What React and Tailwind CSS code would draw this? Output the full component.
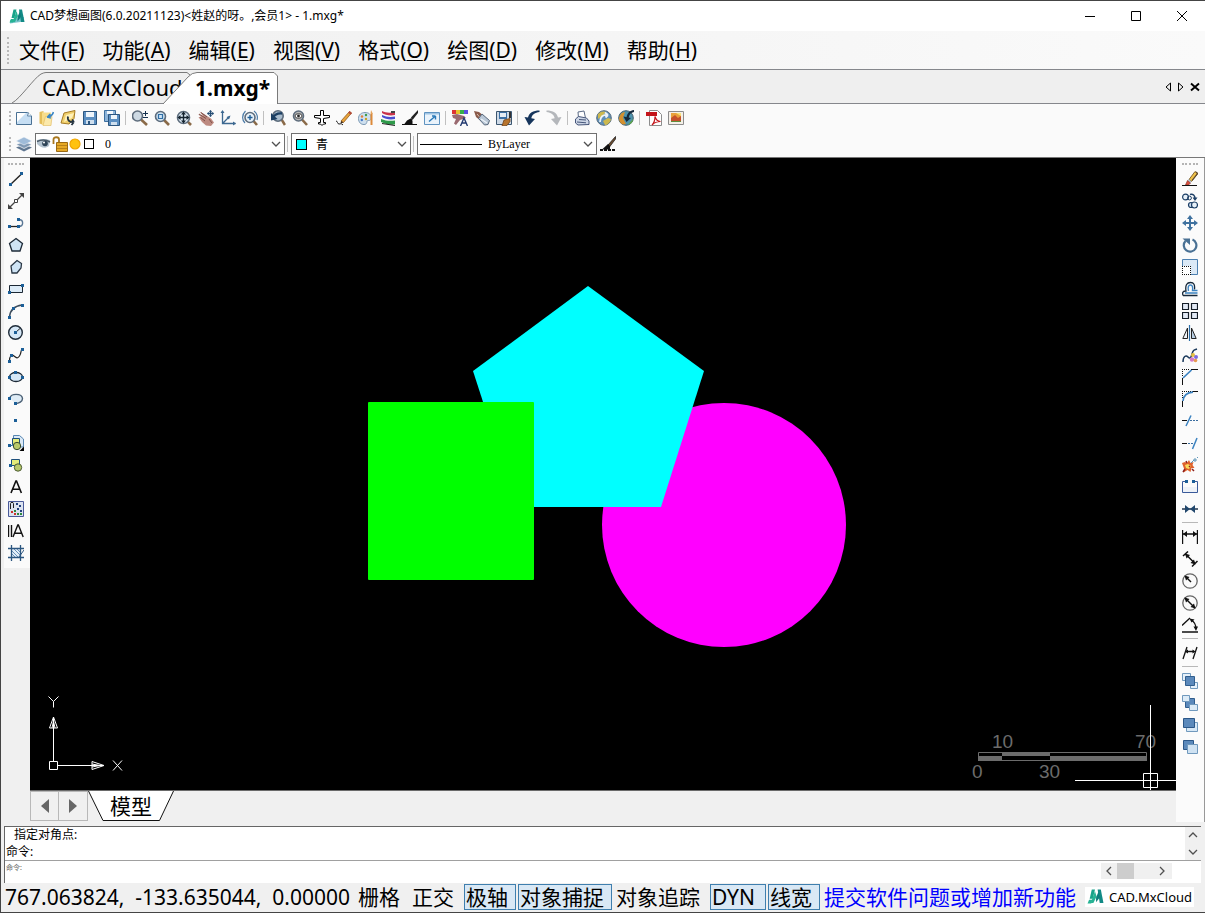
import React from "react";

const N = "#1d3f66";
const B = "#2f6ea5";

function Svg({ children }) {
  return (
    <svg viewBox="0 0 16 16" className="h-4 w-4 shrink-0" fill="none" aria-hidden="true">
      {children}
    </svg>
  );
}

const Dot = ({ x, y }) => <rect x={Math.round(x - 1.5)} y={Math.round(y - 1.5)} width="3" height="3" fill="#1c5f98" />;

const Lens = ({ x = 6.5, y = 6.5, r = 5, fill = "#cfe3f3" }) => (
  <>
    <path d={`M${x + r * 0.7} ${y + r * 0.7}L15 15`} stroke="#8a6a48" strokeWidth="2.600" />
    <circle cx={x} cy={y} r={r} fill={fill} stroke="#5d6c7c" strokeWidth="1.600" />
  </>
);

/* File and view toolbar */
const I = {
  new: (
    <>
      <path d="M.5 2.500h11l4 3.500v8.500H.5z" fill="#c6def3" stroke="#4a7194" />
      <path d="M1 3h9L1 12z" fill="#fff" />
      <path d="M12.500 2.500l-1 3.500h4" stroke="#4a7194" strokeWidth=".8" fill="#e9f3fb" />
    </>
  ),
  open: (
    <>
      <path d="M1.500 2l4-1v14l-4-1.500z" fill="#e3bd5a" />
      <path d="M4 2.500h9V15H4z" fill="#f7dd8a" />
      <path d="M5 15.500l2.500-9H14l-1 9z" fill="#fbe9ab" stroke="#e0b95a" strokeWidth=".6" />
      <path d="M15.500 2c-1 3-3 5-6 5m0 0l2.800-3M9 7l4 1" stroke="#3b86c4" strokeWidth="1.700" />
    </>
  ),
  openCloud: (
    <>
      <path d="M4 3l11-2.500-1 8L9 14 1 13z" fill="#f0cf6c" stroke="#a57b25" />
      <path d="M6 5l8-2-2 5-8 4z" fill="#fff1ba" />
      <path d="M8 6.500c-1 4 2 6 6 5.500m0 0l-2-2.500m2 2.500l-2.500 3" stroke="#22323f" strokeWidth="1.800" />
    </>
  ),
  save: (
    <>
      <path d="M1.500 1.500h13v13h-13z" fill="#5b8fc2" stroke="#2c5680" />
      <path d="M4 2h8v5H4z" fill="#eef5fb" />
      <path d="M4 10h8v4H4z" fill="#cfdfee" />
      <path d="M6 11h2v3H6z" fill="#2c5680" />
    </>
  ),
  saveAs: (
    <>
      <path d="M.5.5h11v11H.5z" fill="#8eb5da" stroke="#3d6f9f" />
      <path d="M3 1h6v3H3z" fill="#f3f8fd" />
      <path d="M4.500 4.500h11v11h-11z" fill="#5b8fc2" stroke="#2c5680" />
      <path d="M7 5h6v4H7z" fill="#eef5fb" />
      <path d="M7 12h6v3H7z" fill="#cfdfee" />
    </>
  ),
  zoomPm: (
    <>
      <Lens x={5.500} y={6} fill="#cdd9e3" />
      <path d="M13.500 1v5M11 3.500h5M11 7.500h5" stroke="#16324f" />
    </>
  ),
  zoomWin: (
    <>
      <Lens />
      <path d="M4.500 4.500h4v4h-4z" stroke={B} strokeWidth="1.200" />
    </>
  ),
  zoomAll: (
    <>
      <Lens x={7.500} y={7.500} r={6} fill="#dce9f4" />
      <path d="M7.500 3v9M3 7.500h9" stroke="#14232f" strokeWidth="1.400" />
      <path d="M7.500 1.500l2.500 3H5zM7.500 13.500l2.500-3H5zM1.500 7.500l3-2.500v5zM13.500 7.500l-3-2.500v5z" fill="#14232f" />
    </>
  ),
  pan: (
    <>
      <path d="M0 4l5 2-3.500-4.500L6 4l3 2 4 2.500 3 4-3 3.500-5-.5-4-3.500-3.500-5L3 7z" fill="#bd8a80" />
      <path d="M1 4l7 4.500M2.500 7.500L7 11M3 2.500L9 7M11 9l3 4" stroke="#7e5049" />
      <path d="M12.500.5v6M9.500 3.500h6" stroke="#254d74" strokeWidth="1.300" />
      <path d="M12.500 0l1.500 2h-3zM12.500 7l1.500-2h-3zM9 3.500l2-1.500v3zM16 3.500L14 2v3z" fill="#254d74" />
    </>
  ),
  ucs: (
    <>
      <path d="M2.500 1v12.500h13M2.500 13.500L9 7" stroke="#3c6890" strokeWidth="1.300" />
      <path d="M2.500 0L.5 3h4zM16 13.500l-3-2v4zM10.500 5.500l-4 1.500L9 9.500z" fill="#3c6890" />
    </>
  ),
  zoomExt: (
    <>
      <Lens x={8} y={7.500} r={5} fill="#e8f2fa" />
      <path d="M3.500 1C-.5 5 0 10 3 13m9-12c3 2 4 6 3 9" stroke="#4c7ca8" strokeWidth="1.200" />
      <path d="M8 5v5M5.500 7.500h5" stroke="#1f5f98" strokeWidth="1.400" />
    </>
  ),
  zoomPrev: (
    <>
      <Lens x={8} y={6} r={5.200} fill="#a9bccd" />
      <path d="M3 7.500C5 4 8 3 12 3.500" stroke="#1b3f63" strokeWidth="2.400" />
      <path d="M1 3v7.500l6.500-1.500z" fill="#1b3f63" />
    </>
  ),
  zoomView: (
    <>
      <Lens x={6.500} y={6} fill="#b9b9b9" />
      <ellipse cx="6.500" cy="6" rx="3.500" ry="2.300" fill="#fff" stroke="#444" />
      <circle cx="6.500" cy="6" r="1.400" fill="#222" />
    </>
  ),
  plane: (
    <path d="M6.500.5h3v5h6v2l-6 1v4h2v1.500H9.500L8 15.500 6.500 14H4.500v-1.500h2v-4l-6-1v-2h6z" fill="#fff" stroke="#000" />
  ),
  pencil: (
    <>
      <path d="M5 11L13.500 1.500 15.500 3 7.500 12.500z" fill="#e8a33c" stroke="#8f5a1c" strokeWidth=".8" />
      <path d="M13.500 1l2.500 2-1.400 1.700-2.400-2z" fill="#b5493c" />
      <path d="M5 11l2.500 1.500-3 1z" fill="#3c2a1c" />
      <path d="M0 11c2 0 1 3 3 3s2-1 4 1" stroke="#222" />
    </>
  ),
  palette: (
    <>
      <path d="M7 2.500c4 0 6 2 6 5s-1 3-3 3 0 4-4 4c-3 0-5.500-2-5.500-6s3-6 6.500-6z" fill="#cfe0ef" stroke="#7d9ab5" />
      <circle cx="4" cy="6.500" r="1.200" fill="#e07b39" />
      <circle cx="8" cy="5" r="1.200" fill="#3f9b4b" />
      <circle cx="3.800" cy="10" r="1.200" fill="#4378c4" />
      <circle cx="8" cy="9" r="1.200" fill="#d0a020" />
      <path d="M13.500 4v11" stroke="#dd8a3a" strokeWidth="2" />
      <path d="M12.500 4l.5-4 2 4z" fill="#e5a45c" />
    </>
  ),
  colors: (
    <>
      <path d="M2 1c4 2 8 2 13 1v3C10 6 5 5 2 3z" fill="#c9344c" />
      <path d="M2 5c4 2 8 2.500 13 1.500V9C10 10 5 9 2 7z" fill="#4a4fd0" />
      <path d="M1 9c5 2 9 2 14 1.500v4C10 15 5 14 1 12z" fill="#2f9a4a" />
      <path d="M2 13.500l13 2" stroke="#222" />
      <path d="M11 1h4v2h-4z" fill="#444" />
    </>
  ),
  brush: (
    <>
      <path d="M16 0L9 7.500l1.500 2.500L16 3z" fill="#222" />
      <path d="M9.500 8L5 10.500 2 14.500h8.500V11z" fill="#111" />
      <path d="M0 14.500h15" stroke="#111" />
    </>
  ),
  full: (
    <>
      <path d="M.5 2.500h15v12H.5z" fill="#eaf3fb" stroke="#5f93c0" />
      <path d="M1 3h14v1.500H1z" fill="#9fc4e4" />
      <path d="M5 11.500L11.500 6m0 0H8m3.500 0v3.500" stroke="#2a79b8" strokeWidth="1.400" />
    </>
  ),
  textStyle: (
    <>
      <path d="M0 0h4v4H0z" fill="#d33" />
      <path d="M4 0h4v4H4z" fill="#e6c52c" />
      <path d="M8 0h4v4H8z" fill="#36b04a" />
      <path d="M12 0h4v4h-4z" fill="#5a4fe0" />
      <path d="M0 5l5-1 7 2 2 2-6 2-4 5-2-1.500 2-4.500-3-1z" fill="#9a6a70" />
      <path d="M8.500 16L12 8l3.500 8M9.700 13h4.600" stroke="#233a70" strokeWidth="1.400" />
    </>
  ),
  match: (
    <>
      <path d="M0 1l5 1 5 4-3 5-5-4z" fill="#8a5a4a" />
      <path d="M3 4l7 8" stroke="#d9c2b0" />
      <path d="M8 4l7.500 6.500-1.500 4-3.500.5L4.500 8.500z" fill="#b9c7d6" stroke="#56667a" />
      <path d="M7 9l6 4" stroke="#eef3f8" strokeWidth="1.300" />
    </>
  ),
  saveBrush: (
    <>
      <path d="M.5 1.500h15v13H.5z" fill="#cdd9e6" stroke="#3b5670" />
      <path d="M3 2h8v7H3z" fill="#3c6fa4" />
      <path d="M4 3h6v4H4z" fill="#e6eef6" />
      <path d="M13 2h2v6h-2z" fill="#333" />
      <path d="M8 10l6-1.500v3l-3 4-5 .5z" fill="#b7742e" stroke="#70421a" strokeWidth=".8" />
    </>
  ),
  undo: <path d="M15.500.5C9 .5 5 3 4 7.500L.5 7l4.500 8.500L11 9l-3.700-.7C8 4.500 11 2.500 15.500 2z" fill="#16355c" />,
  redo: <path d="M.5.5C7 .5 11 3 12 7.500l3.500-.5-4.500 8.500L5 9l3.700-.7C8 4.500 5 2.500.5 2z" fill="#b4b7bb" />,
  print: (
    <>
      <path d="M4.500 8L4 2l6-1 1.500 7" fill="#fff" stroke="#5b6b86" />
      <path d="M1.500 9l3-2.500 8 1.500 2.500 3v3.500l-11 .5-2.500-2z" fill="#cdd6e6" stroke="#46567a" />
      <path d="M3 12l9 .8M5 9.500l7 .5" stroke="#46567a" />
    </>
  ),
  globe1: (
    <>
      <circle cx="8" cy="8" r="7.300" fill="#5f8fb8" stroke="#566b7b" />
      <path d="M2 4c3-3 6-3 8-2L6 6l-4 3zM7 11l5-3 3 1c-1 4-4 6-6 6z" fill="#cdb94e" />
      <path d="M4 12c0-5 3-8 8-7m0 0L9 2.500M12 5L9.500 7.500" stroke="#eef3f6" strokeWidth="1.800" />
    </>
  ),
  globe2: (
    <>
      <circle cx="8" cy="8" r="7.300" fill="#4d93ad" stroke="#46606f" />
      <path d="M1 8c1-4 3-6 6-6L5 8l3 6-3 .5c-3-1-4-4-4-6.500z" fill="#d5902e" />
      <path d="M10 14.500l5-5.500c0 3-2 5.500-5 5.500z" fill="#5fa54b" />
      <path d="M16 1c-4 .5-6 3-6.500 7" stroke="#14283c" strokeWidth="2.200" />
      <path d="M5.500 6.500L13 8l-4.500 4z" fill="#14283c" />
    </>
  ),
  pdf: (
    <>
      <path d="M3.500.5h8l4 4v11h-12z" fill="#fff" stroke="#8d8d8d" />
      <path d="M0 2h11v4H0z" fill="#c4161c" />
      <path d="M9 6.500c1 3.500 3 5 5.500 5-3 0-6 1-8.500 3.500 2.500-2.500 3-5 3-8.500z" stroke="#c4161c" strokeWidth="1.200" />
    </>
  ),
  image: (
    <>
      <path d="M.5 1.500h15v13H.5z" fill="#f4efe8" stroke="#8c8c8c" />
      <path d="M3 3h10v9H3z" fill="#e9a13b" />
      <path d="M3 8l4-3 3 3 3-2v6H3z" fill="#c5502c" />
      <path d="M8 3h5v3z" fill="#f7e27a" />
      <path d="M3 11h10v1H3z" fill="#5e8d3c" />
    </>
  ),
  layers: (
    <>
      <path d="M0 11.500l8-3 8 3-8 4z" fill="#5f7690" />
      <path d="M0 8.500l8-3 8 3-8 4z" fill="#8099b4" stroke="#fff" strokeWidth=".7" />
      <path d="M0 5l8-4 8 4-8 4z" fill="#9fbbd8" stroke="#fff" strokeWidth=".5" />
    </>
  ),
  eye: (
    <>
      <path d="M1 4c3-1.500 10-1.500 13 0l-1 6c-4 3-8 2-12-2z" fill="#b4c3cf" />
      <path d="M1 5.500c4-2 9-2 13 .5" stroke="#4a5a68" strokeWidth="1.500" />
      <circle cx="9" cy="7.500" r="2.800" fill="#2e4356" />
      <circle cx="8" cy="6.500" r="1" fill="#fff" />
    </>
  ),
  lock: (
    <>
      <path d="M1.500 8V3.500c0-3 5.500-3 5.500 0V8" stroke="#a9781f" strokeWidth="1.800" />
      <path d="M4.500 6.500h11v9h-11z" fill="#e6a926" stroke="#9b6a14" />
      <path d="M5 9.500h10M5 12.500h10" stroke="#b9821a" />
    </>
  ),
  sun: <circle cx="7" cy="8" r="5" fill="#ffc20e" stroke="#f0a500" strokeWidth="1.200" />,
  inkBrush: (
    <>
      <path d="M15.500.5L8 9l-2 3 3.500-1L15.500 3z" fill="#6b4a2c" stroke="#222" strokeWidth=".8" />
      <path d="M8 8l-6 5.500h8V10z" fill="#111" />
      <path d="M0 14h16" stroke="#111" strokeWidth="2" strokeDasharray="3 1" />
    </>
  ),

  /* Draw toolbar */
  line: (
    <>
      <path d="M2 14L14 2.500" stroke="#222" strokeWidth="1.400" />
      <Dot x={2.500} y={13.500} />
      <Dot x={13.500} y={2.500} />
    </>
  ),
  xline: (
    <>
      <path d="M1 15L15 1" stroke="#444" strokeWidth="1.200" />
      <path d="M0 16v-5l5 5zM16 0v5l-5-5z" fill="#444" />
      <path d="M6.500 6.500h3v3h-3z" fill="#fff" stroke="#444" />
    </>
  ),
  pline: (
    <>
      <path d="M2 11.500h8.500" stroke="#222" strokeWidth="1.300" />
      <path d="M10.500 4.500c5.500 0 5.500 7 0 7" stroke="#5a7896" strokeWidth="1.400" />
      <Dot x={1.500} y={11.500} />
      <Dot x={10.500} y={11.500} />
      <Dot x={10.500} y={4.500} />
    </>
  ),
  polygon: <path d="M8 1.500l6.500 5-2.500 7.500H4L1.500 6.500z" fill="#cfe4f5" stroke="#1e2b38" strokeWidth="1.300" />,
  rev: <path d="M9 1.500l4.500 3L13 9l-4 5H4L3 7z" fill="#cfe4f5" stroke="#2b3846" strokeWidth="1.300" />,
  rect: (
    <>
      <path d="M1.500 4.500h13v7h-13z" fill="#dcebf7" stroke="#1b2733" />
      <Dot x={1.500} y={11.500} />
      <Dot x={14.500} y={4.500} />
    </>
  ),
  arc: (
    <>
      <path d="M1.500 14C2 7 7 3 14 2" stroke="#3c4c5c" strokeWidth="1.500" />
      <Dot x={1.500} y={14.500} />
      <Dot x={5.500} y={5.500} />
      <Dot x={14.500} y={2.500} />
    </>
  ),
  circle: (
    <>
      <circle cx="7.500" cy="7.500" r="6.800" fill="#d5e7f6" stroke="#1e2b38" strokeWidth="1.400" />
      <path d="M7.500 7.500l4.500-4" stroke="#222" />
      <Dot x={7.500} y={7.500} />
    </>
  ),
  spline: (
    <>
      <path d="M1.500 14c0-5 2-7 4.500-5s3.500 3 5.500 0 1-5 2.500-7" stroke="#222" strokeWidth="1.200" />
      <Dot x={1.500} y={14.500} />
      <Dot x={3.500} y={8.500} />
      <Dot x={14.500} y={2.500} />
    </>
  ),
  ellipse: (
    <>
      <ellipse cx="8" cy="8" rx="6.500" ry="4.500" fill="#d5e7f6" stroke="#1e2b38" strokeWidth="1.300" />
      <Dot x={1.500} y={8.500} />
      <Dot x={14.500} y={8.500} />
      <Dot x={7.500} y={3.500} />
    </>
  ),
  earc: (
    <>
      <path d="M2 7.500C2 2 14 2 14.500 7.500 14.500 10.500 11 12.500 7.500 12.500" fill="#dfecf6" stroke="#4a5f74" strokeWidth="1.400" />
      <Dot x={1.500} y={7.500} />
      <Dot x={7.500} y={12.500} />
    </>
  ),
  point: <Dot x={7.500} y={7.500} />,
  insert: (
    <>
      <path d="M5.500.5h6l4 3.500v8h-10z" fill="#dbe9f6" stroke="#5786b2" />
      <path d="M4.500 3.500h7v6h-7z" fill="#e4ec7a" stroke="#1d4f7c" />
      <circle cx="9" cy="11" r="3.700" fill="#b8c96a" stroke="#3a4a2c" />
      <path d="M2 10.500h2.500V9" stroke={B} />
      <Dot x={1.500} y={10.500} />
      <path d="M16 11.500V16h-4.500z" fill="#000" />
    </>
  ),
  block: (
    <>
      <path d="M3.500 2.500h8v6h-8z" fill="#e4ec7a" stroke="#1d4f7c" />
      <circle cx="10" cy="10.500" r="3.700" fill="#b8c96a" stroke="#4a5a34" />
      <Dot x={2.500} y={8.500} />
    </>
  ),
  textA: <path d="M3 14L7.900 2h.6L13.400 14M4.700 10.300h7" stroke="#111" strokeWidth="1.600" />,
  hatch: (
    <>
      <path d="M.5.5h15v15H.5z" fill="#dce3f0" stroke="#4a5a9a" />
      <path d="M2.500 8V2.500c0-1.500 3-1.500 3 0V7" stroke="#222" />
      <path d="M8 2h2v2H8zM11 4h2v2h-2zM9 7h2v2H9zM12 9h2v2h-2z" fill="#23407a" />
      <path d="M3 10h2v2H3zM6 12h2v2H6z" fill="#c8352c" />
      <path d="M9 12h2v2H9zM6 9h2v2H6zM12 12h2v2h-2z" fill="#2c8a3c" />
    </>
  ),
  mtext: <path d="M.5 2v12M3.500 2v12M5 14L9.800 2h.6L15.200 14M6.500 10.300h7" stroke="#111" strokeWidth="1.400" />,
  region: (
    <>
      <path d="M3.500 3.500h9v9h-9z" fill="#e3eef8" />
      <path d="M4 6l6 6M4 9l3.500 3.500M6 4l7 7M9 4l4 4" stroke="#5c86b0" strokeWidth=".9" />
      <path d="M3.500 0v16M12.500 0v16M0 3.500h16M0 12.500h16" stroke="#2c5680" strokeWidth="1.300" />
      <path d="M11 12l5-7" stroke="#2c5680" />
    </>
  ),

  /* Modify toolbar */
  erase: (
    <>
      <path d="M7 8.500L13 .5l3 2-6.500 8z" fill="#efc24a" stroke="#6b4d1c" strokeWidth=".8" />
      <path d="M14 1l1.500 1.500L10 9.500" stroke="#5a4632" strokeWidth="1.200" />
      <path d="M6.500 8l3 2.500-1 1.500-3-2.500z" fill="#b9c7d4" />
      <path d="M5.500 9.500l3 2.500L6.500 14H3.500z" fill="#d9503f" stroke="#7c2a20" strokeWidth=".6" />
      <path d="M0 14.500h15" stroke="#111" />
    </>
  ),
  copy: (
    <>
      <circle cx="3.500" cy="4" r="2.900" fill="#e7f0f8" stroke={N} strokeWidth="1.200" />
      <circle cx="7.500" cy="5" r="1.900" stroke={N} />
      <circle cx="9" cy="12" r="2.500" fill="#cfdff0" stroke={N} strokeWidth="1.200" />
      <circle cx="12.500" cy="12" r="3" fill="#e7f0f8" stroke={N} strokeWidth="1.200" />
      <path d="M8 1.500c3-1 5 1 5 4" stroke={N} strokeWidth="1.500" />
      <path d="M10.500 4.500h5L13 8z" fill={N} />
    </>
  ),
  move: (
    <>
      <path d="M8 2v12M2 8h12" stroke="#3f719f" strokeWidth="2" />
      <path d="M8 0l3 4H5zM8 16l3-4H5zM0 8l4-3v6zM16 8l-4-3v6z" fill="#3f719f" />
    </>
  ),
  rotate: (
    <>
      <path d="M10.500 2.500A6.300 6.300 0 1 1 3.500 4" stroke="#4a7194" strokeWidth="2.200" />
      <path d="M.5 1.500H8V8z" fill="#4a7194" />
    </>
  ),
  scale: (
    <>
      <path d="M.5.500h15v15H.5z" fill="#dbe9f6" stroke="#4d80b0" />
      <path d="M0 7h9v9H0z" fill="#fff" />
      <path d="M0 7.500h9M0 15.500h9M.5 7v9M8.500 7v9" stroke="#111" strokeDasharray="1 1" />
    </>
  ),
  offset: (
    <>
      <path d="M1 14.500h14.500M1 14.500c-1-3 0-4.500 3-4.500C3 4 5 1.500 8.500 1.500S13 4 12.500 8.500" stroke="#16283a" strokeWidth="1.300" />
      <path d="M3 12h12.500M6.500 10c-1-4 0-6 2-6s2.500 2 2 5.500h5" stroke="#3b82c0" strokeWidth="1.400" />
    </>
  ),
  array: (
    <path d="M.5.5h6v6h-6zM9.500.5h6v6h-6zM.5 9.500h6v6h-6zM9.500 9.500h6v6h-6z" fill="#e2e9f4" stroke="#141c26" strokeWidth="1.200" />
  ),
  mirror: (
    <>
      <path d="M.8 13.500L5.500 3v10.500z" fill="#eef3f8" stroke="#222" />
      <path d="M14.200 13.500L9.500 3v10.500z" fill="#b9cfe4" stroke="#222" />
      <path d="M7.500 0v16" stroke="#2c6ea8" strokeWidth="1.200" />
    </>
  ),
  blend: (
    <>
      <path d="M1 15c0-6 3-7 5-5s3 1 4-3 2-4 5-5" stroke="#1c3a5c" strokeWidth="1.500" />
      <circle cx="11" cy="8" r="2" fill="#e7c142" />
      <circle cx="14" cy="10" r="2" fill="#7a6ae0" />
      <circle cx="10" cy="12.500" r="2.200" fill="#d47ac8" />
      <circle cx="13.500" cy="13.500" r="1.800" fill="#e89a50" />
    </>
  ),
  chamfer: (
    <>
      <path d="M0 .5h8M.5 0v8" stroke="#111" strokeDasharray="1 1" />
      <path d="M9 .5h7M.5 9v7" stroke="#111" />
      <path d="M1 9L9.500 1" stroke="#3b82c0" strokeWidth="1.700" />
    </>
  ),
  fillet: (
    <>
      <path d="M0 .5h9M.5 0v8" stroke="#111" strokeDasharray="1 1" />
      <path d="M10 .5h6M.5 10v6" stroke="#111" />
      <path d="M1 10C1.500 5 5 1.500 11 1.200" stroke="#3b82c0" strokeWidth="1.700" />
    </>
  ),
  trim: (
    <>
      <path d="M0 7.500h5" stroke="#111" />
      <path d="M8 7.500h8" stroke="#3b6ea0" strokeDasharray="2 1" />
      <path d="M4 13L9 2.500" stroke="#3b82c0" strokeWidth="1.500" />
    </>
  ),
  extend: (
    <>
      <path d="M0 8.500h5" stroke="#111" />
      <path d="M6 8.500h5" stroke="#3b6ea0" strokeDasharray="2 1" />
      <path d="M10.500 14l4.500-11" stroke="#3b82c0" strokeWidth="1.500" />
    </>
  ),
  explode: (
    <>
      <path d="M0 6l3-1 2 1 2-3 1.500 3 3-1-1 3 2 3-3 0-1 4-3-2-4 2.500.5-4z" fill="#e0622c" />
      <path d="M3 8l3-1 3 2-2 3-3-1z" fill="#f8da5c" />
      <path d="M1 15l2-3M4 4l1 2M10 12l2 2M7 9l1 1" stroke="#8c1f1c" strokeWidth="1.500" />
      <path d="M9 6l3-3M13 1v4M11 3h4M15 0l1 1" stroke="#5e96b8" />
    </>
  ),
  brk: (
    <>
      <path d="M4 2.500H.5v11h15v-11H12" stroke="#3a5a9a" />
      <path d="M1 8h14v5H1z" fill="#eef2f8" />
      <Dot x={4.500} y={2.500} />
      <Dot x={11.500} y={2.500} />
    </>
  ),
  join: (
    <>
      <path d="M0 8h16" stroke="#20354c" strokeWidth="1.500" />
      <path d="M3 4l5 4-5 4zM13 4L8 8l5 4z" fill="#20466c" />
    </>
  ),
  dimLin: (
    <>
      <path d="M.5 1v14M15.500 1v14M1 5h14" stroke="#111" strokeWidth="1.400" />
      <path d="M1 5l4-3v6zM15 5l-4-3v6z" fill="#111" />
    </>
  ),
  dimAl: (
    <>
      <path d="M1 5l5-4.500M10 15.500L15.500 10M3.500 3l9.500 9.500" stroke="#111" strokeWidth="1.500" />
      <path d="M3 2.500l5 1.500-3.500 3.500zM13.500 13.500l-5-1.500L12 8.500z" fill="#111" />
    </>
  ),
  dimRad: (
    <>
      <circle cx="8" cy="8" r="7.200" fill="#fafafa" stroke="#666" strokeWidth="1.300" />
      <path d="M9 9L4 4" stroke="#111" strokeWidth="1.400" />
      <path d="M2.500 2.500l5 1.500L4 7.500z" fill="#111" />
    </>
  ),
  dimDia: (
    <>
      <circle cx="8" cy="8" r="7.200" fill="#fafafa" stroke="#666" strokeWidth="1.300" />
      <path d="M3 3l10 10" stroke="#111" strokeWidth="1.400" />
      <path d="M2.500 2.500l5 1.500L4 7.500zM13.500 13.500l-5-1.500L12 8.500z" fill="#111" />
    </>
  ),
  dimAng: (
    <>
      <path d="M0 15h16M0 8.500L8 1M9 3c4 2 5 5 5 9" stroke="#111" strokeWidth="1.300" />
      <path d="M7.500 1.500l5 1-3 3zM11.500 9.500h4.500l-2 4.500z" fill="#111" />
    </>
  ),
  dimBase: (
    <>
      <path d="M1 14L5 2M11 14l4-12M4 6.500h8" stroke="#111" strokeWidth="1.300" />
      <path d="M3 6.500l3-2v4zM13.500 6.500l-3-2v4z" fill="#111" />
    </>
  ),
  front: (
    <>
      <path d="M.5.5h8v7h-8z" fill="#e6f1fa" stroke="#7099bd" />
      <path d="M8.500 9.500h7v6h-7z" fill="#e6f1fa" stroke="#7099bd" />
      <path d="M3.500 3.500h9v9h-9z" fill="#5b89bb" stroke="#315e8e" />
    </>
  ),
  back: (
    <>
      <path d="M3.500 3.500h9v9h-9z" fill="#5b89bb" stroke="#315e8e" />
      <path d="M.5.5h7v6h-7z" fill="#dcebf7" stroke="#7099bd" />
      <path d="M7.500 9.500h8v6h-8z" fill="#dcebf7" stroke="#7099bd" />
    </>
  ),
  above: (
    <>
      <path d="M4.500 5.500h11v9h-11z" fill="#d7e8f6" stroke="#7099bd" />
      <path d="M1.500 1.500h11v9h-11z" fill="#5b89bb" stroke="#2b5788" />
    </>
  ),
  below: (
    <>
      <path d="M1.500 1.500h10v9h-10z" fill="#5b89bb" stroke="#2b5788" />
      <path d="M5.500 5.500h10v9h-10z" fill="#cfe2f2" stroke="#7099bd" />
    </>
  ),
};

const topGroups = [
  [["new", "新建"], ["open", "打开"], ["openCloud", "打开云图"], ["save", "保存"], ["saveAs", "另存为"]],
  [["zoomPm", "缩放"], ["zoomWin", "窗口缩放"], ["zoomAll", "全部显示"], ["pan", "平移"], ["ucs", "坐标系"], ["zoomExt", "范围缩放"]],
  [["zoomPrev", "上一视图"], ["zoomView", "查看"], ["plane", "定位"], ["pencil", "绘制"], ["palette", "颜色"], ["colors", "图层颜色"], ["brush", "笔刷"], ["full", "全屏"]],
  [["textStyle", "文字样式"], ["match", "特性匹配"], ["saveBrush", "样式保存"]],
  [["undo", "撤销"], ["redo", "重做"]],
  [["print", "打印"], ["globe1", "上传"], ["globe2", "下载"]],
  [["pdf", "输出PDF"], ["image", "输出图片"]],
];

const drawGroups = [
  [
    ["line", "直线"], ["xline", "构造线"], ["pline", "多段线"], ["polygon", "正多边形"], ["rev", "多边形"], ["rect", "矩形"],
    ["arc", "圆弧"], ["circle", "圆"], ["spline", "样条曲线"], ["ellipse", "椭圆"], ["earc", "椭圆弧"], ["point", "点"],
    ["insert", "插入块"], ["block", "创建块"], ["textA", "单行文字"], ["hatch", "填充"], ["mtext", "多行文字"], ["region", "图案"],
  ],
];

const modifyGroups = [
  [
    ["erase", "删除"], ["copy", "复制"], ["move", "移动"], ["rotate", "旋转"], ["scale", "缩放对象"], ["offset", "偏移"],
    ["array", "阵列"], ["mirror", "镜像"], ["blend", "光顺曲线"], ["chamfer", "倒角"], ["fillet", "圆角"], ["trim", "修剪"],
    ["extend", "延伸"], ["explode", "分解"], ["brk", "打断"], ["join", "合并"],
  ],
  [["dimLin", "线性标注"], ["dimAl", "对齐标注"], ["dimRad", "半径标注"], ["dimDia", "直径标注"], ["dimAng", "角度标注"]],
  [["dimBase", "编辑标注"]],
  [["front", "前置"], ["back", "后置"], ["above", "置于上方"], ["below", "置于下方"]],
];

function Tool({ id, label }) {
  return (
    <button type="button" aria-label={label} className="flex h-[22px] w-[22px] shrink-0 items-center justify-center">
      <Svg>{I[id]}</Svg>
    </button>
  );
}

function Rail({ groups }) {
  return (
    <div className="flex flex-col items-center">
      <div className="mt-[5px] mb-[3px] w-4 border-t-2 border-dotted border-[#b4b4b4]" />
      {groups.map((g, i) => (
        <React.Fragment key={i}>
          {i > 0 && <div className="my-[2px] h-[2px] w-4 border-t border-[#b8b8b8]" />}
          {g.map(([id, label]) => (
            <Tool key={id} id={id} label={label} />
          ))}
        </React.Fragment>
      ))}
    </div>
  );
}

function Chevron({ d, className = "" }) {
  return (
    <svg viewBox="0 0 10 10" className={"h-[10px] w-[10px] shrink-0 " + className} fill="none" aria-hidden="true">
      <path d={d} stroke="#505050" strokeWidth="1.300" />
    </svg>
  );
}

function Combo({ label, value, width, lead, selectClass }) {
  return (
    <div className={"relative flex h-[22px] items-center border border-[#707070] bg-white " + width}>
      {lead}
      <select
        aria-label={label}
        defaultValue={value}
        className={"h-full min-w-0 flex-1 appearance-none bg-transparent pr-4 text-[12px] text-black outline-none " + selectClass}
      >
        <option>{value}</option>
      </select>
      <Chevron d="M1 3l4 4 4-4" className="pointer-events-none absolute right-[3px]" />
    </div>
  );
}

function Logo({ className, base = false }) {
  return (
    <svg viewBox="0 0 16 16" className={className} fill="none" aria-hidden="true">
      {base && <path d="M1 12l14-3v4.500l-14 2z" fill="#7cc4cc" />}
      <path d="M4.500 1.500h3L5.500 10H2.500z" fill="#19a38a" />
      <path d="M2 11h3l-1 3.500H.5z" fill="#27b394" />
      <path d="M7.500 3L9 8l-3 6-2.500 0z" fill="#27b394" />
      <path d="M10 1.500h3L15.500 14h-3.500z" fill="#128a86" />
      <path d="M8.500 9L11 3l1 6-3.500 4.500z" fill="#0f7d7b" />
    </svg>
  );
}

const menus = [
  ["文件", "F"], ["功能", "A"], ["编辑", "E"], ["视图", "V"],
  ["格式", "O"], ["绘图", "D"], ["修改", "M"], ["帮助", "H"],
];

const modes = [
  ["栅格", false],
  ["正交", false],
  ["极轴", true],
  ["对象捕捉", true],
  ["对象追踪", false],
  ["DYN", true],
  ["线宽", true],
];

function Drawing() {
  return (
    <div className="relative min-w-0 flex-1 overflow-hidden bg-black">
      <svg viewBox="0 0 1146 632" className="absolute inset-0 h-full w-full" aria-label="图形">
        <circle cx="694" cy="367" r="122" fill="#ff00ff" />
        <path d="M558 128L674 213L631 349H487L443 213z" fill="#00ffff" />
        <rect x="338" y="244" width="166" height="178" rx="1" fill="#00ff00" />
      </svg>
      <svg viewBox="0 0 90 90" className="absolute bottom-[10px] left-[10px] h-[90px] w-[90px]" fill="none" stroke="#fff" aria-hidden="true">
        <path d="M9.500 71.500h8v8h-8zM13.500 71.500V27M17.500 75.500H64" />
        <path d="M13.500 27l-4 11h8zM12 38l1.500-7 1.500 7" />
        <path d="M64 75.500l-12-4v8zM52 74l8 1.500-8 1.500" />
        <path d="M8.500 6.500l5 5 5-5M13.500 11.500v6M73 70.500l9 10M82 70.500l-9 10" />
      </svg>
      <svg viewBox="0 0 206 92" className="absolute right-0 bottom-0 h-[92px] w-[206px]" aria-hidden="true">
        <g fontFamily="Liberation Sans, sans-serif" fontSize="19" fill="#6c6c6c">
          <text x="22" y="50">10</text>
          <text x="165" y="50">70</text>
          <text x="2" y="80">0</text>
          <text x="69" y="80">30</text>
        </g>
        <path d="M8.500 54.500h168v8h-168z" fill="#000" stroke="#6c6c6c" />
        <path d="M8 58h24v5H8zM32 54h48v4H32zM80 58h97v5H80z" fill="#6c6c6c" />
        <path d="M105 82.500h101M180.500 7v85M173.500 75.500h14v14h-14z" fill="none" stroke="#fff" />
      </svg>
    </div>
  );
}

export default function App() {
  return (
    <div className="flex h-screen flex-col overflow-hidden border-t border-b border-l border-[#444] bg-[#f0f0f0] font-['Noto_Sans','Noto_Sans_CJK_SC',sans-serif] text-black">
      {/* Title bar */}
      <header className="flex h-[30px] shrink-0 items-center bg-white pr-[17px] pl-2">
        <Logo className="h-4 w-4" base />
        <h1 className="ml-[5px] flex-1 truncate text-[12px]">CAD梦想画图(6.0.20211123)&lt;姓赵的呀。,会员1&gt; - 1.mxg*</h1>
        <div className="flex gap-[34px]">
          <button type="button" aria-label="最小化">
            <svg viewBox="0 0 12 12" className="h-3 w-3" stroke="#000"><path d="M1 6.500h10" /></svg>
          </button>
          <button type="button" aria-label="最大化">
            <svg viewBox="0 0 12 12" className="h-3 w-3" fill="none" stroke="#000"><path d="M1.500 1.500h9v9h-9z" /></svg>
          </button>
          <button type="button" aria-label="关闭">
            <svg viewBox="0 0 12 12" className="h-3 w-3" stroke="#000"><path d="M1 1l10 10M11 1L1 11" /></svg>
          </button>
        </div>
      </header>

      {/* Menu bar */}
      <nav className="flex h-[38px] shrink-0 items-center bg-linear-to-r from-[#f0f0f0] to-[#fafafa] pl-[6px]">
        <div className="h-[27px] border-l-2 border-dotted border-[#b8b8b8]" />
        <div className="ml-[10px] flex gap-[18px]">
          {menus.map(([t, k]) => (
            <button key={k} type="button" className="text-[21px] leading-[30px] whitespace-nowrap">
              {t}(<span className="underline decoration-1 underline-offset-2">{k}</span>)
            </button>
          ))}
        </div>
      </nav>

      {/* Document tabs */}
      <div className="flex h-[35px] shrink-0 items-end border-y border-[#85878c] bg-[#efefef] pl-[11px]">
        <button type="button" className="relative h-[31px] w-[178px] shrink-0 overflow-hidden pl-[30px] text-left text-[22px] leading-[31px]">
          <svg viewBox="0 0 178 31" className="absolute inset-0 h-full w-full" aria-hidden="true">
            <path d="M0 31C8 27 22 6 29 2Q32 .5 34 .5H175L178 3" fill="none" stroke="#7a7a7a" />
          </svg>
          <span className="relative">CAD.MxCloud</span>
        </button>
        <button type="button" className="relative -mb-px -ml-[27px] h-8 w-[115px] shrink-0 pl-[32px] text-left text-[21px] leading-[31px] font-bold">
          <svg viewBox="0 0 115 32" className="absolute inset-0 h-full w-full" aria-hidden="true">
            <path d="M0 32L25 5Q29 .5 34 .5H111L114.500 4V32" fill="#fff" stroke="#7a7a7a" />
          </svg>
          <span className="relative">1.mxg*</span>
        </button>
        <div className="flex h-full flex-1 items-center justify-end gap-[5px] pr-[5px]">
          <button type="button" aria-label="上一个标签">
            <svg viewBox="0 0 8 10" className="h-[10px] w-2" fill="none" stroke="#000"><path d="M6.500 1v8L2 5z" /></svg>
          </button>
          <button type="button" aria-label="下一个标签">
            <svg viewBox="0 0 8 10" className="h-[10px] w-2" fill="none" stroke="#000"><path d="M1.500 1v8L6 5z" /></svg>
          </button>
          <button type="button" aria-label="关闭标签">
            <svg viewBox="0 0 10 10" className="h-[10px] w-[10px]" stroke="#000" strokeWidth="1.900"><path d="M1 1.500l8 7M9 1.500l-8 7" /></svg>
          </button>
        </div>
      </div>

      {/* Toolbars */}
      <div className="flex h-[54px] shrink-0 flex-col border-b border-[#777] bg-[#fafafa] pl-2">
        <div className="flex h-[28px] items-center">
          <div className="mr-[2px] h-[14px] border-l-2 border-dotted border-[#b8b8b8]" />
          {topGroups.map((g, i) => (
            <React.Fragment key={i}>
              {i > 0 && <div className="mr-[3px] ml-[2px] h-[14px] border-l border-[#c0c0c0]" />}
              {g.map(([id, label]) => (
                <Tool key={id} id={id} label={label} />
              ))}
            </React.Fragment>
          ))}
        </div>
        <div className="flex h-[24px] items-center">
          <div className="mr-[2px] h-[14px] border-l-2 border-dotted border-[#b8b8b8]" />
          <Tool id="layers" label="图层管理" />
          <Combo
            label="图层"
            value="0"
            width="w-[250px]"
            selectClass="pl-[11px] font-['Liberation_Serif',serif]"
            lead={
              <>
                <Svg>{I.eye}</Svg>
                <Svg>{I.lock}</Svg>
                <Svg>{I.sun}</Svg>
                <span className="h-[10px] w-[10px] shrink-0 border border-black bg-white" />
              </>
            }
          />
          <div className="mr-[3px] ml-[2px] h-4 border-l border-[#c0c0c0]" />
          <Combo
            label="颜色"
            value="青"
            width="w-[120px]"
            selectClass="pl-[9px] font-['Noto_Sans_CJK_SC',sans-serif]"
            lead={<span className="ml-1 h-[11px] w-[11px] shrink-0 border border-black bg-[#00ffff]" />}
          />
          <div className="mr-[3px] ml-[2px] h-4 border-l border-[#c0c0c0]" />
          <Combo
            label="线型"
            value="ByLayer"
            width="w-[180px]"
            selectClass="pl-[6px] font-['Liberation_Serif',serif]"
            lead={<span className="ml-[2px] h-px w-[62px] shrink-0 bg-black" />}
          />
          <Tool id="inkBrush" label="线型管理" />
        </div>
      </div>

      {/* Workspace */}
      <div className="flex min-h-0 flex-1">
        <aside className="w-[29px] shrink-0">
          <div className="ml-[3px] bg-[#fafafa] pr-[2px] pb-1">
            <Rail groups={drawGroups} />
          </div>
        </aside>
        <main className="flex min-w-0 flex-1 flex-col">
          <div className="flex min-h-0 flex-1 border-b border-[#6a6a6a]">
            <Drawing />
          </div>
          <div className="flex h-[31px] shrink-0 items-start">
            <button type="button" aria-label="向左滚动" className="flex h-[30px] w-[29px] items-center justify-center border border-[#b8b8b8]">
              <svg viewBox="0 0 8 14" className="h-[14px] w-2"><path d="M8 0v14L0 7z" fill="#666" /></svg>
            </button>
            <button type="button" aria-label="向右滚动" className="flex h-[30px] w-[29px] items-center justify-center border border-l-0 border-[#b8b8b8]">
              <svg viewBox="0 0 8 14" className="h-[14px] w-2"><path d="M0 0v14l8-7z" fill="#666" /></svg>
            </button>
            <button type="button" className="relative h-[30px] w-[86px] text-[21px] leading-[30px]">
              <svg viewBox="0 0 86 30" className="absolute inset-0 h-full w-full" aria-hidden="true">
                <path d="M.5 0L15 29.500H71.500L85.500 0" fill="#fff" stroke="#111" />
              </svg>
              <span className="relative">模型</span>
            </button>
          </div>
        </main>
        <aside className="w-[29px] shrink-0 border-r border-[#999] bg-[#fbfbfb]">
          <Rail groups={modifyGroups} />
        </aside>
      </div>

      {/* Command line */}
      <section className="mt-1 mr-1 ml-[3px] flex h-[57px] shrink-0 flex-col border-t border-l border-[#666] bg-white font-['Noto_Sans','Noto_Sans_CJK_SC',sans-serif]">
        <div className="flex h-[34px] border-b border-[#a0a0a0]">
          <div className="flex flex-1 flex-col pl-px text-[12px] leading-[15px]">
            <p className="pl-2">指定对角点:</p>
            <p className="mt-[2px]">命令:</p>
          </div>
          <div className="flex w-4 flex-col items-center justify-around bg-[#f0f0f0]">
            <button type="button" aria-label="向上"><Chevron d="M1 7l4-4 4 4" /></button>
            <button type="button" aria-label="向下"><Chevron d="M1 3l4 4 4-4" /></button>
          </div>
        </div>
        <div className="flex flex-1 items-start">
          <input aria-label="命令输入" defaultValue="命令:" className="h-[11px] min-w-0 flex-1 pl-px text-[7px] text-[#666] outline-none" />
          <div className="mt-[2px] mr-[29px] flex h-4 w-[71px] items-center justify-between bg-[#f0f0f0]">
            <button type="button" aria-label="向左" className="flex w-4 justify-center"><Chevron d="M7 1L3 5l4 4" /></button>
            <span className="mr-auto h-full w-[17px] bg-[#cdcdcd]" />
            <button type="button" aria-label="向右" className="flex w-5 justify-center"><Chevron d="M3 1l4 4-4 4" /></button>
          </div>
        </div>
      </section>

      {/* Status bar */}
      <footer className="flex h-[29px] shrink-0 items-center gap-[2px] pb-[2px] pl-1 text-[21px] leading-[26px] whitespace-nowrap">
        <output className="w-[349px] shrink-0 whitespace-pre">767.063824,&nbsp; -133.635044,&nbsp; 0.00000</output>
        {modes.map(([t, on]) => (
          <button
            key={t}
            type="button"
            aria-pressed={on}
            className={
              "h-[26px] shrink-0 border pl-px text-left leading-[24px] " +
              (on ? "border-[#3f7fae] bg-[#d9e8f5] " : "border-transparent ") +
              (t === "DYN" ? "pr-[10px]" : "pr-[7px]")
            }
          >
            {t}
          </button>
        ))}
        <a href="#feedback" className="ml-[2px] text-[#0000ff]">提交软件问题或增加新功能</a>
        <div className="ml-[7px] flex h-[20px] items-center bg-white px-[2px]">
          <Logo className="h-[17px] w-[17px]" />
          <span className="ml-[5px] text-[13px]">CAD.MxCloud</span>
        </div>
      </footer>
    </div>
  );
}
